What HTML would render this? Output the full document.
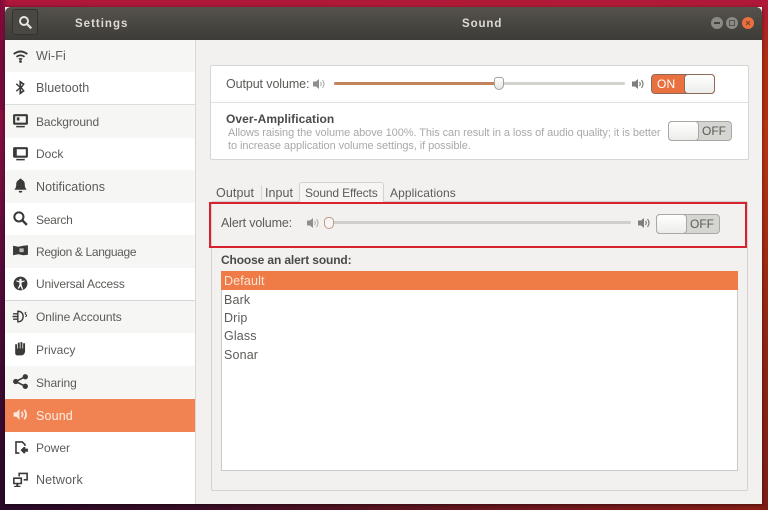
<!DOCTYPE html>
<html><head><meta charset="utf-8"><style>
html,body{margin:0;padding:0;width:768px;height:510px;overflow:hidden;background:#300a24}
*{box-sizing:border-box}
#bg{position:absolute;left:0;top:0;width:768px;height:510px;background:
linear-gradient(90deg,rgba(120,8,60,.95) 0,rgba(120,8,60,0) 8px),
linear-gradient(180deg,#b0183a 0,rgba(176,24,58,0) 60px),
linear-gradient(90deg,#7a1040 0,#a51c34 30%,#c8340f 60%,#d9480f 80%,#b22f12 100%)}
#bb{position:absolute;left:0;top:500px;width:768px;height:10px;background:linear-gradient(90deg,#2a0a2a 0,#3a0d26 25%,#5a1420 50%,#7a1a1c 80%,#8a1f16 100%)}
#ll{position:absolute;left:0;top:110px;width:6px;height:400px;background:linear-gradient(180deg,#8a1040,#560b3a 40%,#3a0a30 75%,#2a0a2a)}
#rr{position:absolute;left:761px;top:120px;width:7px;height:390px;background:linear-gradient(180deg,#bd3512,#8f2414 60%,#7d1d18)}
#root{position:absolute;left:0;top:0;width:768px;height:510px;filter:blur(.35px);font-family:"Liberation Sans",sans-serif;color:#5b5b58;font-size:12.5px}
.a{position:absolute;white-space:nowrap}
.t{position:absolute;white-space:nowrap;line-height:16px;height:16px}
#win{left:5px;top:7px;width:757px;height:497px;background:#f2f1f0;box-shadow:0 1px 4px rgba(0,0,0,.5)}
#hd{left:5px;top:7px;width:757px;height:33px;border-radius:6px 6px 0 0;background:linear-gradient(180deg,#55524c,#3d3b37)}
.row{position:absolute;left:5px;width:190px}
.row span{position:absolute;left:31px;top:8px;line-height:16px;letter-spacing:.15px;white-space:nowrap}
.row span.s{font-size:12px;letter-spacing:0}
.row span.d{top:9px}
.row svg{position:absolute;left:7px;top:7px;width:17px;height:17px;fill:#3a3a38}
.g{background:#f6f6f5}.w{background:#fff}
.sw{position:absolute;width:64px;height:20px;border-radius:4px;font-size:12px;line-height:18px}
.knob{position:absolute;top:0;width:31px;height:100%;border-radius:4px;background:linear-gradient(180deg,#fff,#ececea);border:1px solid #a8a8a4}
.off{background:#d5d5d2;border:1px solid #a8a8a4;color:#5b5b58}
.on{background:#e9703f;border:1px solid #8c6a5a;color:#fff}
.track{position:absolute;height:3px;background:#cfcfcc;border-radius:2px}
.spk{position:absolute;width:14px;height:14px}
</style></head><body>
<div id="bg"></div><div id="bb"></div><div id="ll"></div><div id="rr"></div>
<div id="root">
<div class="a" id="win"></div>
<div class="a" id="hd"></div>
<div class="a" style="left:12px;top:9px;width:26px;height:26px;border:1px solid #353330;border-radius:3px;background:#4a4843"></div>
<svg class="a" style="left:18px;top:15px" width="15" height="15" viewBox="0 0 15 15"><circle cx="6" cy="6" r="4" fill="none" stroke="#e8e6e0" stroke-width="1.9"/><path d="M9 9l4.300 4.300" stroke="#e8e6e0" stroke-width="2.200"/></svg>
<div class="t" style="left:75px;top:15px;color:#dfdbd2;font-weight:bold;font-size:11.500px;letter-spacing:1px;top:16px">Settings</div>
<div class="t" style="left:462px;top:16px;color:#dfdbd2;font-weight:bold;font-size:11.500px;letter-spacing:.9px">Sound</div>
<div class="a" style="left:711px;top:17px;width:12px;height:12px;border-radius:50%;background:#8b8a84"></div>
<div class="a" style="left:714px;top:22px;width:6px;height:2px;background:#44423e"></div>
<div class="a" style="left:726px;top:17px;width:12px;height:12px;border-radius:50%;background:#8b8a84"></div>
<div class="a" style="left:729px;top:20px;width:6px;height:6px;border:1px solid #55534e"></div>
<div class="a" style="left:742px;top:17px;width:12px;height:12px;border-radius:50%;background:#e9703f"></div>
<svg class="a" style="left:745px;top:20px" width="6" height="6"><path d="M1 1l4 4M5 1l-4 4" stroke="#8a3d20" stroke-width="1.100"/></svg>

<div class="a" style="left:195px;top:40px;width:1px;height:464px;background:#d8d8d5"></div>

<div class="row g" style="top:40px;height:32px"><svg viewBox="0 0 16 16"><path d="M1 6q7-5.500 14 0l-1.200 1.300q-5.800-4.300-11.600 0zM3.600 8.600q4.400-3.400 8.800 0l-1.200 1.300q-3.200-2.300-6.400 0zM6 11q2-1.400 4 0l-1.200 1.200q-.8-.5-1.600 0z"/><circle cx="8" cy="13.600" r="1.300"/></svg><span>Wi-Fi</span></div>
<div class="row w" style="top:72px;height:32px"><svg viewBox="0 0 16 16"><path d="M7 1l5 3.700L9.400 8l2.600 3.300L7 15V9.500L4.600 12l-1-1L7 8 3.600 5l1-1L7 6.500zM8.600 4.200v2.400l1.500-1.200zM8.600 9.400v2.400l1.500-1.200z" fill-rule="evenodd"/></svg><span style="letter-spacing:.05px">Bluetooth</span></div>
<div class="a" style="left:5px;top:104px;width:190px;height:1px;background:#dcdcda"></div>
<div class="row g" style="top:105px;height:33px"><svg viewBox="0 0 16 16"><path d="M2.500 2h11A1.500 1.500 0 0 1 15 3.500v7a1.500 1.500 0 0 1-1.500 1.500h-11A1.500 1.500 0 0 1 1 10.500v-7A1.500 1.500 0 0 1 2.500 2zM3 4v6h10V4zM4 13h8v1.500H4z" fill-rule="evenodd"/><path d="M4.500 5h2.500v3h-2.500z"/></svg><span class="s d" style="letter-spacing:-.1px">Background</span></div>
<div class="row w" style="top:138px;height:32px"><svg viewBox="0 0 16 16"><path d="M2.500 2h11A1.500 1.500 0 0 1 15 3.500v7a1.500 1.500 0 0 1-1.500 1.500h-11A1.500 1.500 0 0 1 1 10.500v-7A1.500 1.500 0 0 1 2.500 2zM4.500 4v6H13V4zM4 13h8v1.500H4z" fill-rule="evenodd"/></svg><span class="s">Dock</span></div>
<div class="row g" style="top:170px;height:33px"><svg viewBox="0 0 16 16"><path d="M8 1.500c.8 0 1.300.5 1.400 1.200C11 3.300 12 4.800 12 6.500c0 3 .6 4 1.800 5.500H2.200C3.400 10.500 4 9.500 4 6.500c0-1.700 1-3.200 2.600-3.800.1-.7.6-1.200 1.400-1.200zM6.300 13h3.400a1.700 1.700 0 0 1-3.400 0z"/></svg><span class="d" style="letter-spacing:.08px">Notifications</span></div>
<div class="row w" style="top:203px;height:32px"><svg viewBox="0 0 16 16"><circle cx="6.500" cy="6.500" r="4.300" fill="none" stroke="#3a3a38" stroke-width="1.900"/><path d="M9.700 9.700L14 14" stroke="#3a3a38" stroke-width="2.300"/></svg><span class="s d" style="letter-spacing:-.25px">Search</span></div>
<div class="row g" style="top:235px;height:33px"><svg viewBox="0 0 16 16"><path d="M1 3.500l5 1 4.500-1L15 3v9l-4.500.5-4.500-1-5 1z"/><path d="M7 6h4v3.500H7z" fill="#bdbdbb"/></svg><span class="s d" style="letter-spacing:-.35px">Region &amp; Language</span></div>
<div class="row w" style="top:268px;height:32px"><svg viewBox="0 0 16 16"><path fill-rule="evenodd" d="M8 1.500a6.500 6.500 0 1 1 0 13 6.500 6.500 0 0 1 0-13zM8 3.500a1.200 1.200 0 1 0 0 2.400 1.200 1.200 0 0 0 0-2.400zM4 6l3 1v2l-1.500 3.500 1 .4L8 10.500l1.500 3.400 1-.4L9 9V7l3-1-.3-1L8 6 4.300 5z"/></svg><span class="s" style="letter-spacing:-.17px">Universal Access</span></div>
<div class="a" style="left:5px;top:300px;width:190px;height:1px;background:#d4d4d2"></div>
<div class="row g" style="top:301px;height:32px"><svg viewBox="0 0 16 16"><path fill="none" stroke="#3a3a38" stroke-width="1.300" d="M1 5.500h4M1 10.500h4M.5 8h5M5.500 3c3 0 5 2 5 5s-2 5-5 5z"/><path fill="none" stroke="#3a3a38" stroke-width="1" d="M13.500 4c-1 0-1.500.8-1 1.500l1 1c.5.7 0 1.500-1 1.500"/></svg><span class="s" style="letter-spacing:-.07px">Online Accounts</span></div>
<div class="row w" style="top:333px;height:33px"><svg viewBox="0 0 16 16"><path d="M3 4h1.800v4H5.500V2.500h1.800V8H8V2h1.800v6h.7V3h1.800v7c0 3-1.500 4.500-4 4.500H5c-1.500 0-2-1-2-2.500z"/></svg><span class="s d">Privacy</span></div>
<div class="row g" style="top:366px;height:33px"><svg viewBox="0 0 16 16"><circle cx="3.500" cy="8" r="2.500"/><circle cx="12.500" cy="3.500" r="2.500"/><circle cx="12.500" cy="12.500" r="2.500"/><path d="M3.500 8l9-4.500M3.500 8l9 4.500" stroke="#3a3a38" stroke-width="1.500"/></svg><span class="s d" style="letter-spacing:-.1px">Sharing</span></div>
<div class="row" style="top:399px;height:33px;background:#f18353;color:#fdeee6"><svg viewBox="0 0 16 16" style="fill:#fbe9df"><path d="M1.500 6H4l3-3v10l-3-3H1.500z"/><path d="M9 5.500q2 2.500 0 5M11.500 3.500q3.500 4.500 0 9" fill="none" stroke="#fbe9df" stroke-width="1.600"/></svg><span class="d">Sound</span></div>
<div class="row w" style="top:432px;height:32px"><svg viewBox="0 0 16 16"><path d="M4 2h6l3 3v1.500h-1.500V5.600L9.400 3.500H4.500v9H7V14H3V2z"/><path d="M8 10.500L11 7.500h1.500v1.500H15v3h-2.500v1.500H11z"/></svg><span class="s">Power</span></div>
<div class="row w" style="top:464px;height:40px"><svg viewBox="0 0 16 16"><path fill-rule="evenodd" d="M1 6h8.500v6.500H6V14h2v1H2v-1h2v-1.500H1zM2.500 7.500V11h5.500V7.500z"/><path d="M6 1.500h9v7.500h-4V7.500h2.500V3H7.500v2H6z"/></svg><span>Network</span></div>

<!-- top panel -->
<div class="a" style="left:210px;top:65px;width:539px;height:95px;background:#fff;border:1px solid #d6d6d3;border-radius:2px"></div>
<div class="a" style="left:211px;top:102px;width:537px;height:1px;background:#e2e2e0"></div>
<div class="t" style="left:226px;top:76px;letter-spacing:-.1px">Output volume:</div>
<svg class="spk" style="left:312px;top:77px" viewBox="0 0 14 14"><path d="M1 4.500h3L7 2v10L4 9.500H1z" fill="#8e8e8c"/><path d="M8.500 5q1.500 2 0 4M10.500 3q3 4 0 8" fill="none" stroke="#b5b5b3" stroke-width="1.200"/></svg>
<div class="track" style="left:334px;top:82px;width:291px;background:#d2d2cf"></div>
<div class="track" style="left:334px;top:82px;width:165px;background:#c2845f"></div>
<div class="a" style="left:494px;top:77px;width:10px;height:13px;background:linear-gradient(#fff,#e6e6e3);border:1px solid #a8a29a;border-radius:3px 3px 5px 5px"></div>
<svg class="spk" style="left:631px;top:77px" viewBox="0 0 14 14"><path d="M1 4.500h3L7 2v10L4 9.500H1z" fill="#7e7e7c"/><path d="M8.500 5q1.500 2 0 4M10.500 3q3 4 0 8" fill="none" stroke="#7e7e7c" stroke-width="1.200"/></svg>
<div class="sw on" style="left:651px;top:74px"><span class="a" style="left:5px;top:0;letter-spacing:.2px;font-size:12px">ON</span><div class="knob" style="right:-1px;top:-1px;height:20px;border-color:#8c6a5a"></div></div>
<div class="t" style="left:226px;top:111px;font-weight:bold;font-size:12px;color:#4a4a48;letter-spacing:.05px">Over-Amplification</div>
<div class="t" style="left:228px;top:125px;color:#a9a9a7;font-size:11px;letter-spacing:-.08px">Allows raising the volume above 100%. This can result in a loss of audio quality; it is better</div>
<div class="t" style="left:228px;top:138px;color:#a9a9a7;font-size:11px;letter-spacing:-.08px">to increase application volume settings, if possible.</div>
<div class="sw off" style="left:668px;top:121px"><span class="a" style="right:5px;top:0;font-size:12px">OFF</span><div class="knob" style="left:-1px;top:-1px;height:20px"></div></div>

<!-- tabs -->
<div class="a" style="left:211px;top:201px;width:537px;height:290px;border:1px solid #d2d2cf;border-radius:2px"></div>
<div class="a" style="left:299px;top:182px;width:85px;height:20px;background:#f6f5f4;border:1px solid #d2d2cf;border-bottom:none;border-radius:3px 3px 0 0"></div>
<div class="a" style="left:261px;top:185px;width:1px;height:15px;background:#d6d6d3"></div>
<div class="t" style="left:216px;top:185px;letter-spacing:.1px">Output</div>
<div class="t" style="left:265px;top:185px;letter-spacing:.05px">Input</div>
<div class="t" style="left:305px;top:185px;font-size:12px;letter-spacing:-.15px">Sound Effects</div>
<div class="t" style="left:390px;top:185px;font-size:12px;letter-spacing:.1px">Applications</div>

<!-- alert -->
<div class="a" style="left:209px;top:202px;width:538px;height:46px;border:2px solid #d8222f"></div>
<div class="t" style="left:221px;top:215px;letter-spacing:-.15px">Alert volume:</div>
<svg class="spk" style="left:306px;top:216px" viewBox="0 0 14 14"><path d="M1 4.500h3L7 2v10L4 9.500H1z" fill="#8e8e8c"/><path d="M8.500 5q1.500 2 0 4M10.500 3q3 4 0 8" fill="none" stroke="#b5b5b3" stroke-width="1.200"/></svg>
<div class="track" style="left:330px;top:221px;width:301px;height:3px"></div>
<div class="a" style="left:324px;top:217px;width:10px;height:12px;background:#f8f6f4;border:1px solid #c09a88;border-radius:5px 5px 6px 6px"></div>
<svg class="spk" style="left:637px;top:216px" viewBox="0 0 14 14"><path d="M1 4.500h3L7 2v10L4 9.500H1z" fill="#7e7e7c"/><path d="M8.500 5q1.500 2 0 4M10.500 3q3 4 0 8" fill="none" stroke="#7e7e7c" stroke-width="1.200"/></svg>
<div class="sw off" style="left:656px;top:214px"><span class="a" style="right:5px;top:0;font-size:12px">OFF</span><div class="knob" style="left:-1px;top:-1px;height:20px"></div></div>

<div class="t" style="left:221px;top:252px;font-weight:bold;font-size:12px;color:#4a4a48;letter-spacing:-.13px">Choose an alert sound:</div>
<div class="a" style="left:221px;top:271px;width:517px;height:200px;background:#fff;border:1px solid #c9c9c6"></div>
<div class="a" style="left:221px;top:271px;width:517px;height:19px;background:#ef7b47"></div>
<div class="t" style="left:224px;top:273px;color:#fbe6da;letter-spacing:.15px">Default</div>
<div class="t" style="left:224px;top:292px;letter-spacing:.15px">Bark</div>
<div class="t" style="left:224px;top:310px;letter-spacing:.15px">Drip</div>
<div class="t" style="left:224px;top:328px;letter-spacing:.15px">Glass</div>
<div class="t" style="left:224px;top:347px;letter-spacing:.15px">Sonar</div>
</div>
</body></html>
